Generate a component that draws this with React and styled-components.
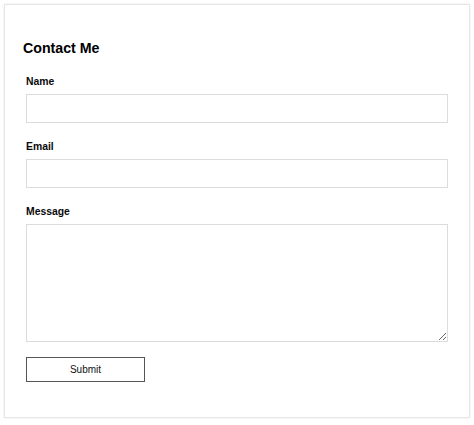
import styled, { createGlobalStyle } from "styled-components";

const GlobalStyle = createGlobalStyle`
  html, body {
    margin: 0;
    padding: 0;
    background: #fff;
  }
  body {
    padding: 4px;
    font-family: "Liberation Sans", Arial, sans-serif;
    color: #000;
  }
`;

const Card = styled.div`
  width: 466px;
  height: 414px;
  box-sizing: border-box;
  border: 1px solid #e6e6e6;
  box-shadow: 0 0 2px rgba(0, 0, 0, 0.1);
  padding: 35px 18px 0 18px;
  background: #fff;
`;

const Title = styled.h2`
  margin: 0 0 19px 0;
  font-size: 14.2px;
  line-height: 16px;
  font-weight: bold;
`;

const Form = styled.form`
  display: flex;
  flex-direction: column;
  padding: 0 3px;
`;

const Field = styled.div`
  display: flex;
  flex-direction: column;
  margin-bottom: ${(p) => p.$gap || 17}px;
`;

const Label = styled.label`
  font-size: 10.4px;
  line-height: 12px;
  font-weight: bold;
  margin: 1px 0 6px;
  color: #0a0a0a;
`;

const Input = styled.input`
  box-sizing: border-box;
  width: 100%;
  height: 29px;
  border: 1px solid #dcdcdc;
  margin: 0;
  padding: 4px 6px;
  font-family: inherit;
  font-size: 10px;
  outline: none;
`;

const TextArea = styled.textarea`
  box-sizing: border-box;
  width: 100%;
  height: 118px;
  border: 1px solid #dcdcdc;
  margin: 0;
  padding: 4px 6px;
  font-family: inherit;
  font-size: 10px;
  display: block;
  outline: none;
`;

const Button = styled.button`
  box-sizing: border-box;
  width: 119px;
  height: 25px;
  margin: 0;
  border: 1px solid #555;
  border-radius: 0;
  background: #fff;
  color: #111;
  font-family: inherit;
  font-size: 10px;
  cursor: pointer;
`;

export default function App() {
  return (
    <>
      <GlobalStyle />
      <Card>
        <Title>Contact Me</Title>
        <Form onSubmit={(e) => e.preventDefault()}>
          <Field>
            <Label htmlFor="name">Name</Label>
            <Input id="name" type="text" />
          </Field>
          <Field>
            <Label htmlFor="email">Email</Label>
            <Input id="email" type="email" />
          </Field>
          <Field $gap={15}>
            <Label htmlFor="message">Message</Label>
            <TextArea id="message" />
          </Field>
          <div>
            <Button type="submit">Submit</Button>
          </div>
        </Form>
      </Card>
    </>
  );
}
